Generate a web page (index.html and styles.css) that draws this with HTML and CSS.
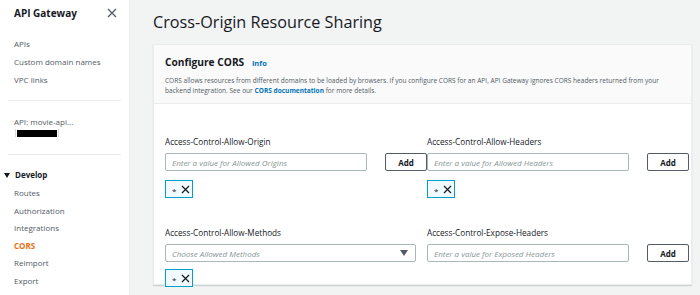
FILE: index.html
```html
<!DOCTYPE html>
<html lang="en">
  <head>
    <meta charset="UTF-8" />
    <meta name="viewport" content="width=device-width, initial-scale=1.0" />
    <title>Cross-Origin Resource Sharing</title>
    <link rel="stylesheet" href="styles.css">
  </head>
  <body>
    <div class="layout">
      <!-- side navigation -->
      <nav class="sidebar">
        <div class="side-head">
          <span class="side-title">API Gateway</span>
          <button class="side-close" aria-label="Close">
            <svg width="10" height="10" viewBox="0 0 10 10"><path d="M1 1L9 9M9 1L1 9" stroke="#545b64" stroke-width="1.3" fill="none"/></svg>
          </button>
        </div>
        <ul class="side-list">
          <li>APIs</li>
          <li>Custom domain names</li>
          <li>VPC links</li>
        </ul>
        <hr class="side-divider">
        <div class="api-name">API: movie-api...</div>
        <div class="api-id"><span class="redact"></span></div>
        <hr class="side-divider">
        <div class="side-section">
          <svg width="6" height="5" viewBox="0 0 6 5"><path d="M0 0H6L3 5Z" fill="#16191f"/></svg>
          Develop
        </div>
        <ul class="side-list sub">
          <li>Routes</li>
          <li>Authorization</li>
          <li>Integrations</li>
          <li class="active">CORS</li>
          <li>Reimport</li>
          <li>Export</li>
        </ul>
      </nav>

      <!-- main content -->
      <main class="content">
        <h1 class="page-title">Cross-Origin Resource Sharing</h1>
        <section class="card">
          <header class="card-header">
            <h2>Configure CORS <a class="info" href="#">Info</a></h2>
            <p>CORS allows resources from different domains to be loaded by browsers. If you configure CORS for an API, API Gateway ignores CORS headers returned from your backend integration. See our <a href="#">CORS documentation</a> for more details.</p>
          </header>
          <div class="card-body">
            <div class="field">
              <label>Access-Control-Allow-Origin</label>
              <div class="input-row">
                <input class="text-input" placeholder="Enter a value for Allowed Origins">
                <button class="add-btn">Add</button>
              </div>
              <div class="token"><span class="token-value">*</span><svg width="9" height="9" viewBox="0 0 9 9"><path d="M1 1L8 8M8 1L1 8" stroke="#16191f" stroke-width="1.2" fill="none"/></svg></div>
            </div>
            <div class="field">
              <label>Access-Control-Allow-Headers</label>
              <div class="input-row">
                <input class="text-input" placeholder="Enter a value for Allowed Headers">
                <button class="add-btn">Add</button>
              </div>
              <div class="token"><span class="token-value">*</span><svg width="9" height="9" viewBox="0 0 9 9"><path d="M1 1L8 8M8 1L1 8" stroke="#16191f" stroke-width="1.2" fill="none"/></svg></div>
            </div>
            <div class="field">
              <label>Access-Control-Allow-Methods</label>
              <div class="select">
                <span>Choose Allowed Methods</span>
                <svg width="8" height="6" viewBox="0 0 8 6"><path d="M0 0H8L4 6Z" fill="#545b64"/></svg>
              </div>
              <div class="token"><span class="token-value">*</span><svg width="9" height="9" viewBox="0 0 9 9"><path d="M1 1L8 8M8 1L1 8" stroke="#16191f" stroke-width="1.2" fill="none"/></svg></div>
            </div>
            <div class="field">
              <label>Access-Control-Expose-Headers</label>
              <div class="input-row lower">
                <input class="text-input" placeholder="Enter a value for Exposed Headers">
                <button class="add-btn">Add</button>
              </div>
            </div>
          </div>
        </section>
      </main>
    </div>
  </body>
</html>
```

FILE: styles.css
```css
body {
  margin: 0;
  font-family: "Open Sans", "Noto Sans", sans-serif;
  color: #16191f;
  background: #f2f3f3;
  height: 295px;
  overflow: hidden;
}

.layout {
  display: flex;
  height: 295px;
}

/* side navigation */
.sidebar {
  width: 129px;
  flex: none;
  background: #fff;
  border-right: 1px solid #eaeded;
  font-size: 8px;
}

.side-head {
  display: flex;
  align-items: center;
  justify-content: space-between;
  height: 26px;
  padding: 0 12px 0 14px;
}

.side-title {
  font-size: 10px;
  font-weight: bold;
}

.side-close {
  border: none;
  background: none;
  padding: 0;
  display: flex;
}

.side-list {
  list-style: none;
  margin: 0;
  padding: 9px 0 0 14px;
  line-height: 18px;
  color: #545b64;
}

.side-list.sub {
  padding-top: 0;
  line-height: 17.6px;
}

.side-list .active {
  color: #ec7211;
  font-weight: bold;
}

.side-divider {
  margin: 11px 8px 0 8px;
  border: none;
  border-top: 1px solid #eaeded;
}

.api-name {
  margin: 15px 0 0 14px;
  color: #545b64;
  line-height: 12px;
}

.api-id {
  display: flex;
  align-items: center;
  height: 8px;
  margin: 1px 0 0 15px;
  border-left: 1px solid #d5dbdb;
  border-right: 1px solid #d5dbdb;
  width: 44px;
  padding: 0 1px;
  box-sizing: border-box;
}

.redact {
  display: block;
  width: 41px;
  height: 7px;
  background: #000;
}

.api-id + .side-divider {
  margin-top: 17px;
}

.side-section {
  display: flex;
  align-items: center;
  gap: 5px;
  margin: 11px 0 0 4px;
  font-weight: bold;
  line-height: 18px;
}

/* main content */
.content {
  flex: 1;
  padding: 0 8px 0 23px;
}

.page-title {
  margin: 12px 0 0 0;
  font-size: 16.2px;
  line-height: 20px;
  font-weight: normal;
}

.card {
  width: 539px;
  margin-top: 12px;
  background: #fff;
  border: 1px solid #eaeded;
  box-shadow: 0 1px 1px rgba(0, 28, 36, 0.15);
  box-sizing: border-box;
}

.card-header {
  background: #fafafa;
  border-bottom: 1px solid #eaeded;
  padding: 9px 8px 8px 11px;
}

.card-header h2 {
  margin: 0;
  font-size: 10.2px;
  line-height: 16px;
}

.info {
  margin-left: 5px;
  font-size: 7.5px;
  color: #0073bb;
  text-decoration: none;
}

.card-header p {
  margin: 5px 0 0 0;
  font-size: 6.55px;
  line-height: 9.5px;
  color: #545b64;
}

.card-header p a {
  color: #0073bb;
  font-weight: bold;
  text-decoration: none;
}

.card-body {
  display: grid;
  grid-template-columns: 262px 262px;
  row-gap: 29px;
  padding: 32px 0 0 11px;
  height: 180px;
  box-sizing: border-box;
}

.field label {
  display: block;
  font-size: 8.2px;
  line-height: 12px;
  margin-bottom: 5px;
}

.input-row {
  display: flex;
  justify-content: space-between;
  align-items: center;
}

.input-row.lower {
  margin-top: 1px;
}

.text-input {
  width: 202px;
  height: 18px;
  box-sizing: border-box;
  border: 1px solid #aab7b8;
  border-radius: 2px;
  padding: 0 6px;
  font-family: inherit;
  font-size: 8px;
}

.text-input::placeholder {
  color: #879596;
  font-style: italic;
}

.add-btn {
  width: 42px;
  height: 18px;
  box-sizing: border-box;
  border: 1px solid #545b64;
  border-radius: 2px;
  background: #fff;
  font-family: inherit;
  font-size: 8px;
  font-weight: bold;
  color: #16191f;
  padding: 0;
}

.select {
  display: flex;
  align-items: center;
  justify-content: space-between;
  width: 251px;
  height: 18px;
  box-sizing: border-box;
  border: 1px solid #aab7b8;
  border-radius: 2px;
  padding: 0 7px 0 6px;
  font-size: 8px;
  font-style: italic;
  color: #879596;
}

.token {
  display: flex;
  align-items: center;
  gap: 5px;
  width: 28px;
  height: 18px;
  box-sizing: border-box;
  margin-top: 9px;
  padding-left: 6px;
  border: 1px solid #00a1c9;
  background: #f1faff;
}

.select + .token {
  margin-top: 7px;
}

.token-value {
  font-size: 8px;
  line-height: 8px;
  padding-top: 4px;
}
```
